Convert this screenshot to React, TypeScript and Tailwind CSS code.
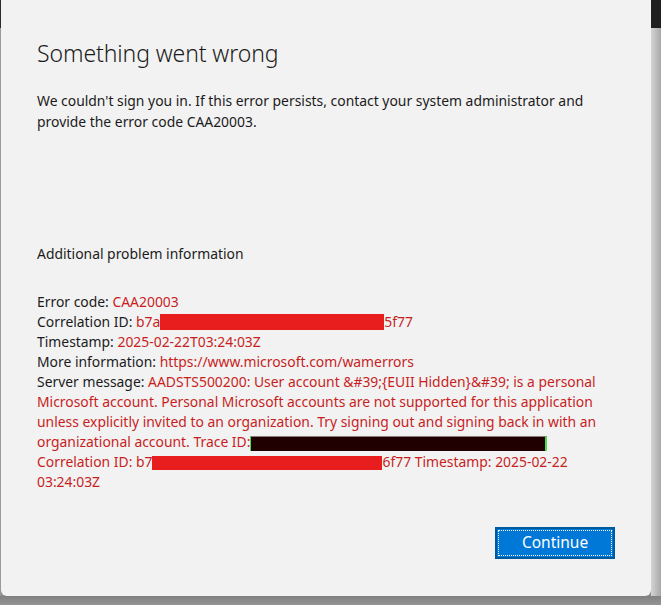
const red = "text-[#c81e1e]";

function Redact({ w, className = "" }: { w: number; className?: string }) {
  return <span className={`inline-block align-middle ${className}`} style={{ width: w }} />;
}

export default function App() {
  return (
    <div className="w-[661px] h-[605px] bg-[#8c8c8c] flex flex-col font-['Noto_Sans',sans-serif] text-[#1b1b1b] overflow-hidden">
      <div className="flex flex-1 min-h-0">
        <div className="w-px flex flex-col">
          <div className="h-7 bg-[#2b2b2b]" />
          <div className="flex-1 bg-[#9a9a9a]" />
        </div>
        <div className="w-[650px] bg-[#f2f2f2] rounded-b-[6px] flex flex-col px-9 pb-9">
          <h1 className="mt-[38px] text-[23px] font-light leading-[30px] tracking-[-0.1px]">Something went wrong</h1>
          <p className="mt-[22px] text-[13.9px] leading-[21px] whitespace-nowrap">
            We couldn't sign you in. If this error persists, contact your system administrator and
            <br />
            provide the error code CAA20003.
          </p>
          <p className="mt-[112px] text-[13.9px] leading-[20px]">Additional problem information</p>
          <div className="mt-[28px] text-[13.9px] leading-[20px] whitespace-nowrap">
            <div>
              Error code: <span className={red}>CAA20003</span>
            </div>
            <div>
              Correlation ID: <span className={red}>b7a</span>
              <Redact w={224} className="h-4 bg-[#e81e1e] -mt-0.5" />
              <span className={red}>5f77</span>
            </div>
            <div>
              Timestamp: <span className={red}>2025-02-22T03:24:03Z</span>
            </div>
            <div>
              More information: <span className={red}>https://www.microsoft.com/wamerrors</span>
            </div>
            <div>
              Server message:{" "}
              <span className={red}>AADSTS500200: User account &amp;#39;{"{EUII Hidden}"}&amp;#39; is a personal</span>
            </div>
            <div className={red}>Microsoft account. Personal Microsoft accounts are not supported for this application</div>
            <div className={red}>unless explicitly invited to an organization. Try signing out and signing back in with an</div>
            <div className={red}>
              organizational account. Trace ID:
              <Redact
                w={297}
                className="h-[15px] bg-[#200000] border-l border-r-2 border-l-[#44e044] border-r-[#44e044] border-t border-t-[#8a7a7a]"
              />
            </div>
            <div className={red}>
              Correlation ID: b7
              <Redact w={230} className="h-[14px] bg-[#e81e1e]" />
              6f77 Timestamp: 2025-02-22
            </div>
            <div className={red}>03:24:03Z</div>
          </div>
          <div className="mt-auto flex justify-end">
            <button className="w-[120px] h-8 -mt-px mb-px bg-[#0078d7] border-2 border-[#005a9e] p-px">
              <span className="flex h-full w-full items-center justify-center border border-dotted border-white text-white text-[15.5px] leading-none">
                Continue
              </span>
            </button>
          </div>
        </div>
        <div className="w-[10px] flex flex-col">
          <div className="h-7 bg-[#1f1f1f]" />
          <div className="flex-1 bg-gradient-to-r from-[#d4d4d4] to-[#a8a8a8]" />
        </div>
      </div>
      <div className="h-[9px] bg-gradient-to-b from-[#808080] to-[#959595]" />
    </div>
  );
}
